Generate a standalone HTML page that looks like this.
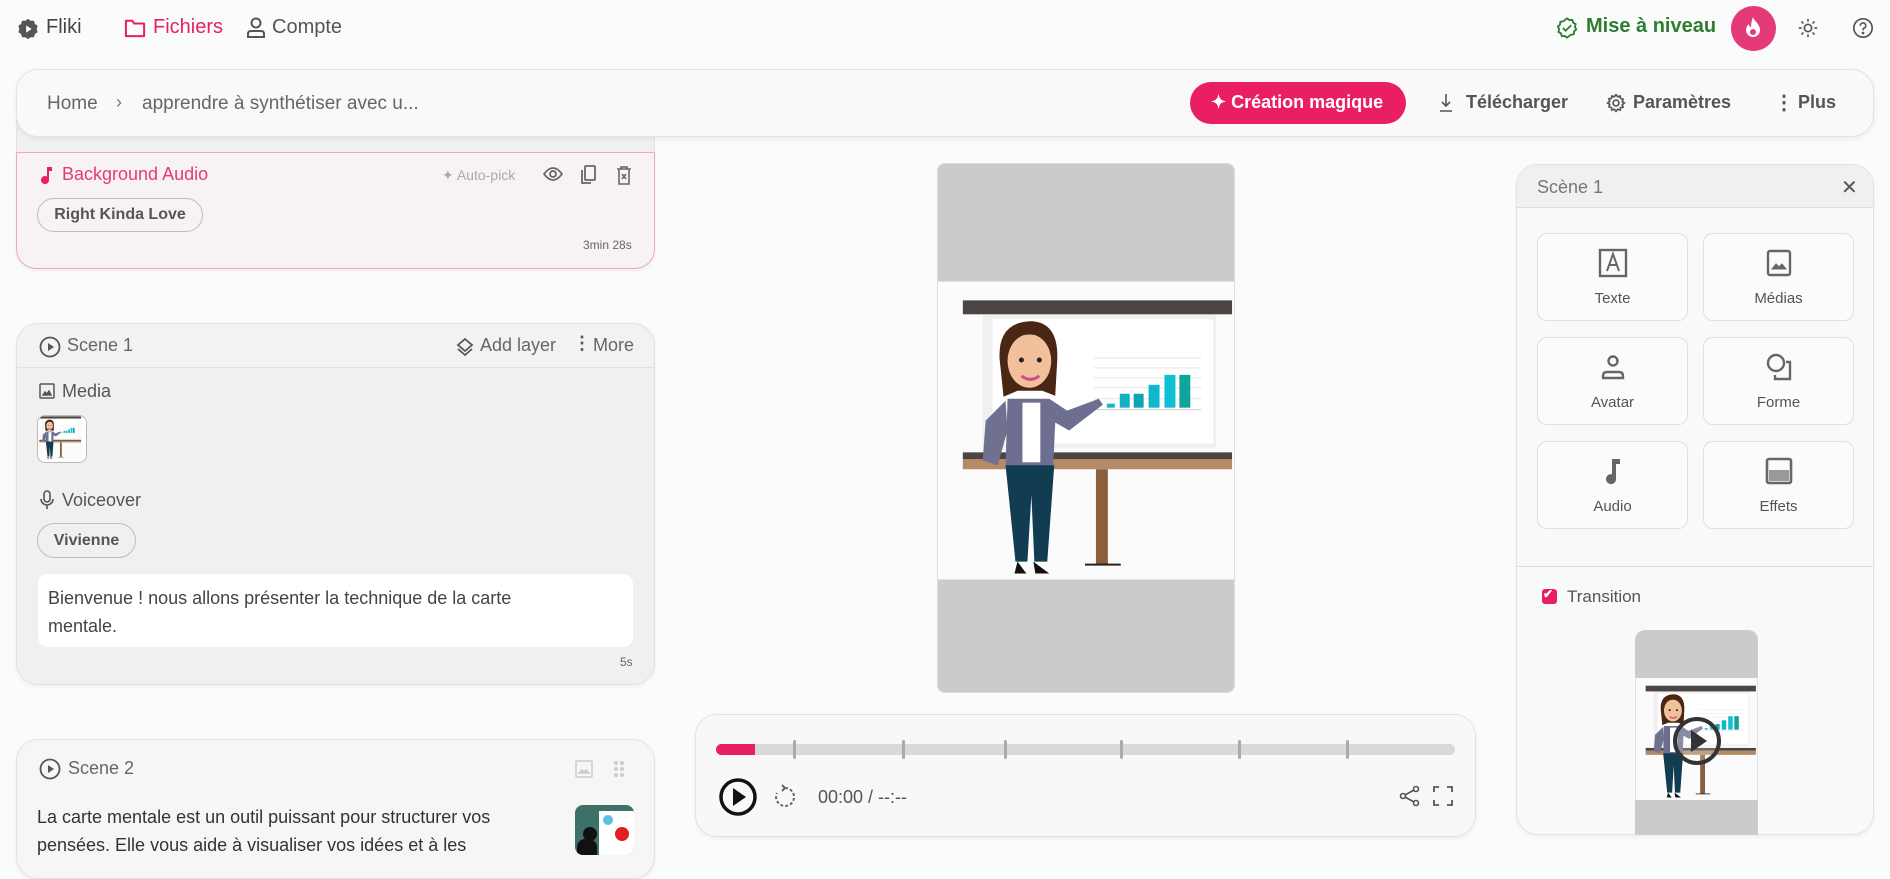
<!DOCTYPE html>
<html><head><meta charset="utf-8"><style>
*{box-sizing:border-box;margin:0;padding:0}
body{width:1890px;height:852px;overflow:hidden;background:#fafbfb;font-family:"Liberation Sans",sans-serif;color:#555;position:relative}
.a{position:absolute}
.t{position:absolute;white-space:nowrap}
.card{position:absolute;border:1px solid #e2e2e2;border-radius:22px;background:#f8f8f8;box-shadow:0 2px 4px rgba(0,0,0,.05)}
.chip{position:absolute;border:1.5px solid #bdbdbd;border-radius:18px;font-weight:bold;font-size:16px;color:#555;display:flex;align-items:center;justify-content:center}
.tile{position:absolute;width:151px;height:88px;border:1px solid #e0e0e0;border-radius:10px;background:#fbfbfb;font-size:15px;color:#555;text-align:center}
.tile svg{position:absolute;left:60px;top:14px}
.tile span{position:absolute;left:0;right:0;top:56px}
svg{display:block}
</style></head><body>
<svg width="0" height="0" style="position:absolute"><defs>
<symbol id="scene" viewBox="0 0 300 300">
<rect width="300" height="300" fill="#fbfbfb"/>
<rect x="45" y="33" width="235" height="135" fill="#f0f0f0"/>
<rect x="55" y="38" width="222" height="125" fill="#fff"/>
<rect x="25" y="19" width="271" height="14" fill="#4a4443"/>
<g stroke="#e3e3e3"><line x1="157" y1="77" x2="265" y2="77"/><line x1="157" y1="87" x2="265" y2="87"/><line x1="157" y1="97" x2="265" y2="97"/><line x1="157" y1="107" x2="265" y2="107"/><line x1="157" y1="118" x2="265" y2="118"/></g>
<rect x="170" y="123" width="8" height="4" fill="#1ab3c4"/><rect x="183" y="113" width="10" height="14" fill="#13b0c4"/><rect x="197" y="113" width="10" height="14" fill="#10a3b0"/><rect x="212" y="104" width="11" height="23" fill="#0eb7cc"/><rect x="228" y="94" width="11" height="33" fill="#0ec0d2"/><rect x="243" y="94" width="11" height="33" fill="#0da49a"/>
<line x1="157" y1="129" x2="265" y2="129" stroke="#ccc"/>
<rect x="25" y="172" width="271" height="7" fill="#4a4443"/>
<rect x="25" y="179" width="271" height="10" fill="#b58a66"/>
<rect x="159" y="189" width="12" height="96" fill="#8b5e3c"/>
<rect x="148" y="284" width="36" height="2" fill="#222"/>
<path d="M68 120 L48 140 L45 180 L60 185 L70 150 Z" fill="#707090"/>
<path d="M70 118 H112 L130 130 L162 118 L166 124 L132 150 L118 142 L116 186 H68 Z" fill="#6e6e90"/>
<rect x="85" y="122" width="18" height="60" fill="#fff"/>
<path d="M68 185 H117 L110 282 H97 L94 215 L90 282 H78 Z" fill="#123c52"/>
<path d="M80 282 l-3 12 l12 0 Z M96 282 l2 12 l14 0 Z" fill="#111"/>
<path d="M62 78 Q60 40 95 40 Q122 42 120 80 L118 115 L105 110 L80 110 L66 116 Z" fill="#4a2614"/>
<ellipse cx="92" cy="80" rx="22" ry="27" fill="#f2c09a"/>
<path d="M70 68 Q80 45 112 58 Q100 50 90 52 Q75 55 70 68Z" fill="#4a2614"/>
<path d="M84 95 Q93 102 102 95" stroke="#d04a8a" stroke-width="3" fill="none"/>
<circle cx="84" cy="79" r="2.5" fill="#222"/><circle cx="102" cy="79" r="2.5" fill="#222"/>
</symbol></defs></svg>

<!-- top nav -->
<svg class="a" style="left:17px;top:18px" width="22" height="22" viewBox="0 0 24 24"><path d="M12 1l3 2 3.5 0 1 3.5 3 2-1 3.5 1 3.5-3 2-1 3.5H15l-3 2-3-2H5.5l-1-3.5-3-2 1-3.5-1-3.5 3-2 1-3.5H9z" fill="#555"/><path d="M10 8v8l6-4z" fill="#fff"/></svg>
<div class="t" style="left:46px;top:16px;font-size:20px;color:#444">Fliki</div>
<svg class="a" style="left:124px;top:18px" width="22" height="20" viewBox="0 0 24 22"><path d="M2 3h7l2 3h11v14H2z" fill="none" stroke="#e91e63" stroke-width="2.2" stroke-linejoin="round"/></svg>
<div class="t" style="left:153px;top:16px;font-size:20px;color:#e91e63">Fichiers</div>
<svg class="a" style="left:246px;top:17px" width="20" height="22" viewBox="0 0 20 22"><circle cx="10" cy="6" r="4.5" fill="none" stroke="#555" stroke-width="2"/><path d="M2 20v-3q0-3 3-3h10q3 0 3 3v3z" fill="none" stroke="#555" stroke-width="2"/></svg>
<div class="t" style="left:272px;top:16px;font-size:20px;color:#555">Compte</div>

<svg class="a" style="left:1556px;top:17px" width="22" height="22" viewBox="0 0 24 24"><path d="M12 1.5l2.6 1.8 3.1-.2 1 3 2.7 1.6-.7 3.1 1.4 2.8-2.4 2 -.3 3.1-3.1.6L12 22.5l-2.5-1.8-3.1.2-1-3-2.7-1.6.7-3.1L2 10.4l2.4-2 .3-3.1 3.1-.6z" fill="none" stroke="#2e7d32" stroke-width="2"/><path d="M7.5 12l3 3 6-6" fill="none" stroke="#2e7d32" stroke-width="2"/></svg>
<div class="t" style="left:1586px;top:15px;font-size:20px;font-weight:bold;color:#2e7d32">Mise à niveau</div>
<div class="a" style="left:1731px;top:6px;width:45px;height:45px;border-radius:50%;background:#e53a78"></div>
<svg class="a" style="left:1743px;top:16px" width="20" height="24" viewBox="0 0 20 24"><path d="M10 1c1 4 7 7 7 13a7 7 0 0 1-14 0c0-3 2-5 3-6 0 2 1 3 2 3 0-4 1-7 2-10z" fill="#fff"/><circle cx="10" cy="16" r="3" fill="#e53a78"/></svg>
<svg class="a" style="left:1797px;top:17px" width="22" height="22" viewBox="0 0 24 24" stroke="#555" stroke-width="1.8" fill="none"><circle cx="12" cy="12" r="4"/><path d="M12 2v3M12 19v3M2 12h3M19 12h3M4.9 4.9l2.1 2.1M17 17l2.1 2.1M4.9 19.1L7 17M17 7l2.1-2.1"/></svg>
<svg class="a" style="left:1852px;top:17px" width="22" height="22" viewBox="0 0 24 24" fill="none" stroke="#555" stroke-width="1.8"><circle cx="12" cy="12" r="10"/><path d="M9 9.5a3 3 0 1 1 4 2.8c-1 .4-1 1.2-1 2.2"/><circle cx="12" cy="17.5" r=".6" fill="#555"/></svg>

<!-- left column -->
<div class="a" style="left:16px;top:120px;width:639px;height:40px;background:#f0f0f0;border-left:1px solid #e2e2e2;border-right:1px solid #e2e2e2"></div>
<div class="a" style="left:16px;top:152px;width:639px;height:117px;background:#f7f2f4;border:1.5px solid #f0a8c0;border-top:1.5px solid #f0a8c0;border-radius:0 0 20px 20px;box-shadow:0 2px 4px rgba(0,0,0,.05)"></div>
<svg class="a" style="left:40px;top:165px" width="14" height="20" viewBox="0 0 14 20"><path d="M7 2h5v4H9v9a4 4 0 1 1-2-3.4z" fill="#e91e63"/></svg>
<div class="t" style="left:62px;top:164px;font-size:18px;color:#e53a78">Background Audio</div>
<div class="t" style="left:442px;top:167px;font-size:14px;color:#aaa">✦ Auto-pick</div>
<svg class="a" style="left:543px;top:166px" width="20" height="16" viewBox="0 0 20 16" fill="none" stroke="#666" stroke-width="1.8"><path d="M1 8q9-12 18 0q-9 12-18 0z"/><circle cx="10" cy="8" r="3"/></svg>
<svg class="a" style="left:580px;top:165px" width="16" height="20" viewBox="0 0 16 20" fill="none" stroke="#666" stroke-width="1.8"><rect x="5" y="1" width="10" height="14" rx="1"/><path d="M2 5v13h9"/></svg>
<svg class="a" style="left:616px;top:165px" width="16" height="20" viewBox="0 0 16 20" fill="none" stroke="#666" stroke-width="1.6"><path d="M1 4h14M5 4V2h6v2M3 4v15h10V4M6 9l4 5M10 9l-4 5"/></svg>
<div class="chip" style="left:37px;top:198px;width:166px;height:34px">Right Kinda Love</div>
<div class="t" style="left:583px;top:238px;font-size:12px;color:#666">3min 28s</div>

<div class="card" style="left:16px;top:323px;width:639px;height:362px;border-radius:22px;background:#f0f0f0"></div>
<div class="a" style="left:17px;top:324px;width:637px;height:44px;border-bottom:1px solid #e0e0e0;border-radius:22px 22px 0 0;background:#f2f2f2"></div>
<svg class="a" style="left:39px;top:336px" width="22" height="22" viewBox="0 0 22 22"><circle cx="11" cy="11" r="9.5" fill="none" stroke="#555" stroke-width="1.8"/><path d="M9 7v8l6-4z" fill="#555"/></svg>
<div class="t" style="left:67px;top:335px;font-size:18px;color:#666">Scene 1</div>
<svg class="a" style="left:456px;top:337px" width="18" height="20" viewBox="0 0 18 20" fill="none" stroke="#555" stroke-width="1.8"><path d="M9 2l7 6-7 6-7-6z"/><path d="M2 12l7 6 7-6"/></svg>
<div class="t" style="left:480px;top:335px;font-size:18px;color:#666">Add layer</div>
<div class="t" style="left:573px;top:333px;font-size:18px;color:#555;font-weight:bold">⋮</div>
<div class="t" style="left:593px;top:335px;font-size:18px;color:#666">More</div>
<svg class="a" style="left:39px;top:383px" width="16" height="16" viewBox="0 0 16 16" fill="none" stroke="#555" stroke-width="1.5"><rect x="1" y="1" width="14" height="14" rx="1"/><path d="M4 12l2-3 2 2 2-3 2 4z" fill="#555"/></svg>
<div class="t" style="left:62px;top:381px;font-size:18px;color:#555">Media</div>
<div class="a" style="left:37px;top:415px;width:50px;height:48px;border:1px solid #bbb;border-radius:8px;background:#fff;overflow:hidden"><svg width="48" height="46" viewBox="20 15 280 270" preserveAspectRatio="none"><use href="#scene"/></svg></div>
<svg class="a" style="left:40px;top:490px" width="14" height="20" viewBox="0 0 14 20" fill="none" stroke="#555" stroke-width="1.6"><rect x="4" y="1" width="6" height="11" rx="3"/><path d="M1 9a6 6 0 0 0 12 0M7 15v4"/></svg>
<div class="t" style="left:62px;top:490px;font-size:18px;color:#555">Voiceover</div>
<div class="chip" style="left:37px;top:523px;width:99px;height:35px">Vivienne</div>
<div class="a" style="left:38px;top:574px;width:595px;height:73px;background:#fff;border-radius:10px"></div>
<div class="a" style="left:48px;top:584px;width:520px;font-size:18px;line-height:28px;color:#444">Bienvenue ! nous allons présenter la technique de la carte<br>mentale.</div>
<div class="t" style="left:620px;top:655px;font-size:12px;color:#666">5s</div>

<div class="card" style="left:16px;top:739px;width:639px;height:140px;background:#f6f6f6"></div>
<svg class="a" style="left:39px;top:758px" width="22" height="22" viewBox="0 0 22 22"><circle cx="11" cy="11" r="9.5" fill="none" stroke="#555" stroke-width="1.8"/><path d="M9 7v8l6-4z" fill="#555"/></svg>
<div class="t" style="left:68px;top:758px;font-size:18px;color:#666">Scene 2</div>
<svg class="a" style="left:575px;top:760px" width="18" height="18" viewBox="0 0 18 18" fill="none" stroke="#ccc" stroke-width="1.5"><rect x="1" y="1" width="16" height="16" rx="1"/><path d="M4 13l3-3 2 2 2-2 3 3z" fill="#ccc"/></svg>
<svg class="a" style="left:613px;top:760px" width="12" height="18" viewBox="0 0 12 18" fill="#ccc"><circle cx="3" cy="3" r="2"/><circle cx="9" cy="3" r="2"/><circle cx="3" cy="9" r="2"/><circle cx="9" cy="9" r="2"/><circle cx="3" cy="15" r="2"/><circle cx="9" cy="15" r="2"/></svg>
<div class="a" style="left:37px;top:803px;width:540px;font-size:18px;line-height:28px;color:#333">La carte mentale est un outil puissant pour structurer vos<br>pensées. Elle vous aide à visualiser vos idées et à les</div>
<div class="a" style="left:575px;top:805px;width:59px;height:50px;border-radius:8px;background:#3c7068;overflow:hidden"><div class="a" style="left:24px;top:6px;width:35px;height:50px;background:#fff"></div><div class="a" style="left:28px;top:10px;width:10px;height:10px;border-radius:50%;background:#5bc0e0"></div><div class="a" style="left:40px;top:22px;width:14px;height:14px;border-radius:50%;background:#e02020"></div><div class="a" style="left:8px;top:22px;width:14px;height:14px;border-radius:50%;background:#111"></div><div class="a" style="left:2px;top:34px;width:20px;height:20px;background:#111;border-radius:8px 8px 0 0"></div></div>

<!-- toolbar -->
<div class="card" style="left:16px;top:69px;width:1858px;height:68px;border-radius:22px;background:#f9f9f9;box-shadow:0 2px 6px rgba(0,0,0,.06)"></div>
<div class="t" style="left:47px;top:93px;font-size:19px;color:#666">Home</div>
<div class="t" style="left:116px;top:92px;font-size:18px;color:#777">›</div>
<div class="t" style="left:142px;top:93px;font-size:19px;color:#666">apprendre à synthétiser avec u...</div>
<div class="a" style="left:1190px;top:82px;width:216px;height:42px;border-radius:21px;background:#ea1f63"></div>
<div class="t" style="left:1211px;top:92px;font-size:18px;font-weight:bold;color:#fff">✦ Création magique</div>
<svg class="a" style="left:1438px;top:93px" width="16" height="20" viewBox="0 0 16 20" fill="none" stroke="#555" stroke-width="1.6"><path d="M8 1v12M4 9l4 4 4-4M2 18h12"/></svg>
<div class="t" style="left:1466px;top:92px;font-size:18px;font-weight:bold;color:#555">Télécharger</div>
<svg class="a" style="left:1606px;top:93px" width="20" height="20" viewBox="0 0 24 24" fill="none" stroke="#555" stroke-width="2"><circle cx="12" cy="12" r="3.5"/><path d="M12 2l2 2.5 3-1 .5 3 3 1-1 3L22 12l-2.5 2 1 3-3 .5-.5 3-3-1L12 22l-2-2.5-3 1-.5-3-3-1 1-3L2 12l2.5-2-1-3 3-.5.5-3 3 1z"/></svg>
<div class="t" style="left:1633px;top:92px;font-size:18px;font-weight:bold;color:#555">Paramètres</div>
<div class="t" style="left:1774px;top:90px;font-size:20px;font-weight:bold;color:#555">⋮</div>
<div class="t" style="left:1798px;top:92px;font-size:18px;font-weight:bold;color:#555">Plus</div>

<!-- center preview -->
<div class="a" style="left:937px;top:163px;width:298px;height:530px;background:#cbcbcb;border-radius:8px;overflow:hidden;border:1px solid #ddd">
<svg class="a" style="left:0;top:117px" width="298" height="299" viewBox="0 0 300 300"><use href="#scene"/></svg></div>

<div class="card" style="left:695px;top:714px;width:781px;height:123px;background:#f8f8f8"></div>
<div class="a" style="left:716px;top:744px;width:739px;height:11px;border-radius:6px;background:#d9d9d9"></div>
<div class="a" style="left:716px;top:744px;width:39px;height:11px;border-radius:6px 0 0 6px;background:#ea1f63"></div>
<div class="a" style="left:793px;top:740px;width:3px;height:19px;background:#aaa;border-radius:2px"></div>
<div class="a" style="left:902px;top:740px;width:3px;height:19px;background:#aaa;border-radius:2px"></div>
<div class="a" style="left:1004px;top:740px;width:3px;height:19px;background:#aaa;border-radius:2px"></div>
<div class="a" style="left:1120px;top:740px;width:3px;height:19px;background:#aaa;border-radius:2px"></div>
<div class="a" style="left:1238px;top:740px;width:3px;height:19px;background:#aaa;border-radius:2px"></div>
<div class="a" style="left:1346px;top:740px;width:3px;height:19px;background:#aaa;border-radius:2px"></div>
<svg class="a" style="left:718px;top:777px" width="40" height="40" viewBox="0 0 40 40"><circle cx="20" cy="20" r="17" fill="none" stroke="#111" stroke-width="3.5"/><path d="M15 11v18l13-9z" fill="#111"/></svg>
<svg class="a" style="left:772px;top:784px" width="26" height="26" viewBox="0 0 26 26" fill="none" stroke="#666" stroke-width="2"><path d="M13 4a9 9 0 1 1-8 5" stroke-dasharray="3 2"/><path d="M13 4l-3-3M13 4l-3 3"/></svg>
<div class="t" style="left:818px;top:787px;font-size:18px;color:#555">00:00 / --:--</div>
<svg class="a" style="left:1399px;top:785px" width="22" height="22" viewBox="0 0 22 22" fill="none" stroke="#555" stroke-width="1.6"><circle cx="17" cy="4" r="2.5"/><circle cx="4" cy="11" r="2.5"/><circle cx="17" cy="18" r="2.5"/><path d="M6 10l9-5M6 12l9 5"/></svg>
<svg class="a" style="left:1433px;top:786px" width="20" height="20" viewBox="0 0 20 20" fill="none" stroke="#555" stroke-width="1.8"><path d="M1 6V1h5M14 1h5v5M19 14v5h-5M6 19H1v-5"/></svg>

<!-- right panel -->
<div class="card" style="left:1516px;top:164px;width:358px;height:671px;background:#f8f9f9;overflow:hidden">
<div class="a" style="left:0;top:0;width:358px;height:43px;background:#f0f0f0;border-bottom:1px solid #ddd"></div>
<div class="t" style="left:20px;top:12px;font-size:18px;color:#777">Scène 1</div>
<div class="t" style="left:324px;top:10px;font-size:20px;color:#555">✕</div>
<div class="a" style="left:0;top:401px;width:358px;height:1px;background:#ddd"></div>
</div>
<div class="tile" style="left:1537px;top:233px"><svg width="30" height="30" viewBox="0 0 30 30" fill="none" stroke="#666" stroke-width="2.4"><rect x="2" y="2" width="26" height="26"/><path d="M9 23l6-17 6 17M11 17h8" stroke-width="2"/></svg><span>Texte</span></div>
<div class="tile" style="left:1703px;top:233px"><svg width="30" height="30" viewBox="0 0 30 30" fill="none" stroke="#666" stroke-width="2.4"><rect x="4" y="3" width="22" height="24" rx="2"/><path d="M8 21l4-5 3 3 3-3 4 5z" fill="#666" stroke-width="1"/></svg><span>Médias</span></div>
<div class="tile" style="left:1537px;top:337px"><svg width="30" height="30" viewBox="0 0 30 30" fill="none" stroke="#666" stroke-width="2.4"><circle cx="15" cy="9" r="4.5"/><path d="M5 26v-2q0-4 4-4h12q4 0 4 4v2z"/></svg><span>Avatar</span></div>
<div class="tile" style="left:1703px;top:337px"><svg width="30" height="30" viewBox="0 0 30 30" fill="none" stroke="#666" stroke-width="2.4"><circle cx="12" cy="11" r="8"/><path d="M22 10h4v17H11v-4"/></svg><span>Forme</span></div>
<div class="tile" style="left:1537px;top:441px"><svg width="30" height="30" viewBox="0 0 30 30"><path d="M14 3h8v5h-4v15a5 5 0 1 1-4-4.8z" fill="#666"/></svg><span>Audio</span></div>
<div class="tile" style="left:1703px;top:441px"><svg width="30" height="30" viewBox="0 0 30 30"><rect x="3" y="3" width="24" height="24" rx="2" fill="none" stroke="#666" stroke-width="2.6"/><rect x="5" y="14" width="20" height="11" fill="#999"/></svg><span>Effets</span></div>
<div class="a" style="left:1542px;top:589px;width:15px;height:15px;border-radius:3px;background:#e91e63"></div>
<div class="t" style="left:1543px;top:587px;font-size:12px;color:#fff;font-weight:bold">✔</div>
<div class="t" style="left:1567px;top:587px;font-size:17px;color:#555">Transition</div>
<div class="a" style="left:1635px;top:630px;width:123px;height:205px;background:#cbcbcb;border-radius:10px 10px 0 0;overflow:hidden">
<svg class="a" style="left:0;top:48px" width="123" height="122" viewBox="0 0 300 300"><use href="#scene"/></svg>
<svg class="a" style="left:37px;top:86px" width="50" height="50" viewBox="0 0 50 50"><circle cx="25" cy="25" r="22" fill="rgba(255,255,255,.2)" stroke="#333" stroke-width="4"/><path d="M19 14v22l16-11z" fill="#333"/></svg>
</div>
</body></html>
